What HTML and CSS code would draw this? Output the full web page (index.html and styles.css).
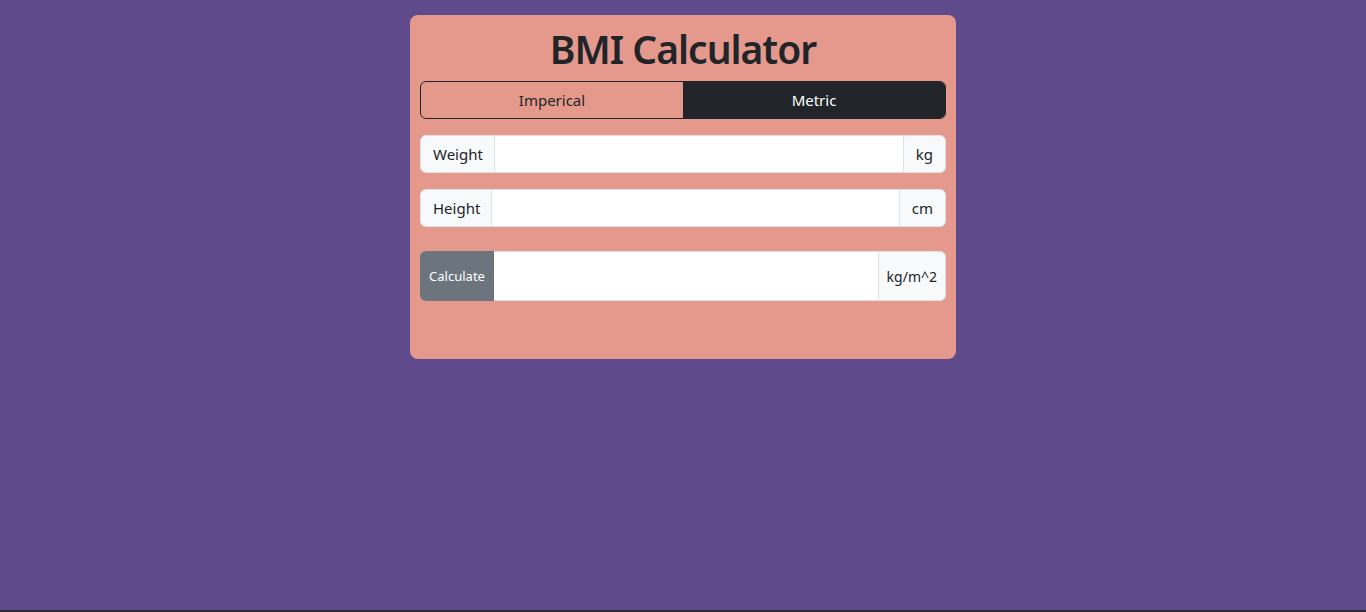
FILE: index.html
```html
<!DOCTYPE html>
<html lang="en">
<head>
<meta charset="utf-8">
<title>BMI Calculator</title>
<link rel="stylesheet" href="styles.css">
</head>
<body>
  <main class="card">
    <h1 class="title">BMI Calculator</h1>
    <div class="units">
      <button class="unit">Imperical</button>
      <button class="unit active">Metric</button>
    </div>
    <div class="group">
      <span class="addon weight">Weight</span>
      <input class="field" type="text">
      <span class="addon">kg</span>
    </div>
    <div class="group">
      <span class="addon height">Height</span>
      <input class="field" type="text">
      <span class="addon">cm</span>
    </div>
    <div class="group result">
      <button class="calc">Calculate</button>
      <input class="field" type="text" readonly>
      <span class="addon small">kg/m^2</span>
    </div>
  </main>
  <div class="edge"></div>
</body>
</html>
```
FILE: styles.css
```css
* { box-sizing: border-box; }

html, body {
  margin: 0;
  height: 612px;
}

body {
  background: #5f4b8b;
  font-family: "Noto Sans", "Open Sans", sans-serif;
  color: #212529;
  display: flex;
  flex-direction: column;
}

.card {
  width: 546px;
  height: 344px;
  margin: 15px auto 0;
  padding: 10px 10px 0;
  background: #e5998c;
  border-radius: 8px;
  display: flex;
  flex-direction: column;
}

.title {
  margin: 0 0 8px;
  font-size: 39px;
  line-height: 48px;
  font-weight: 600;
  text-align: center;
  letter-spacing: -1px;
}

.units {
  display: flex;
  height: 38px;
  border: 1px solid #212529;
  border-radius: 6px;
  overflow: hidden;
  margin-bottom: 16px;
}

.unit {
  flex: 1;
  border: 0;
  background: transparent;
  font: inherit;
  font-size: 15px;
  color: #212529;
  padding: 0;
}

.unit.active {
  background: #212529;
  color: #fff;
}

.group {
  display: flex;
  height: 38px;
  margin-bottom: 16px;
}

.group.result {
  height: 50px;
  margin-top: 8px;
}

.addon {
  display: flex;
  align-items: center;
  padding: 0 12px;
  background: #f8f9fa;
  border: 1px solid #dee2e6;
  font-size: 15px;
  color: #212529;
  white-space: nowrap;
}

.addon:first-child {
  border-radius: 6px 0 0 6px;
}

.addon:last-child {
  border-radius: 0 6px 6px 0;
  margin-left: -1px;
}

.addon.weight { width: 75px; }
.addon.height { width: 72px; }

.addon.small {
  font-size: 14px;
  padding: 0 8px;
}

.field {
  flex: 1;
  min-width: 0;
  border: 1px solid #dee2e6;
  border-left: 0;
  background: #fff;
  font: inherit;
  outline: none;
}

.calc {
  width: 74px;
  border: 0;
  border-radius: 6px 0 0 6px;
  background: #6c757d;
  color: #fff;
  font: inherit;
  font-size: 13px;
  padding: 0;
}

.edge {
  margin-top: auto;
  height: 2px;
  background: #2e2a33;
}
```
